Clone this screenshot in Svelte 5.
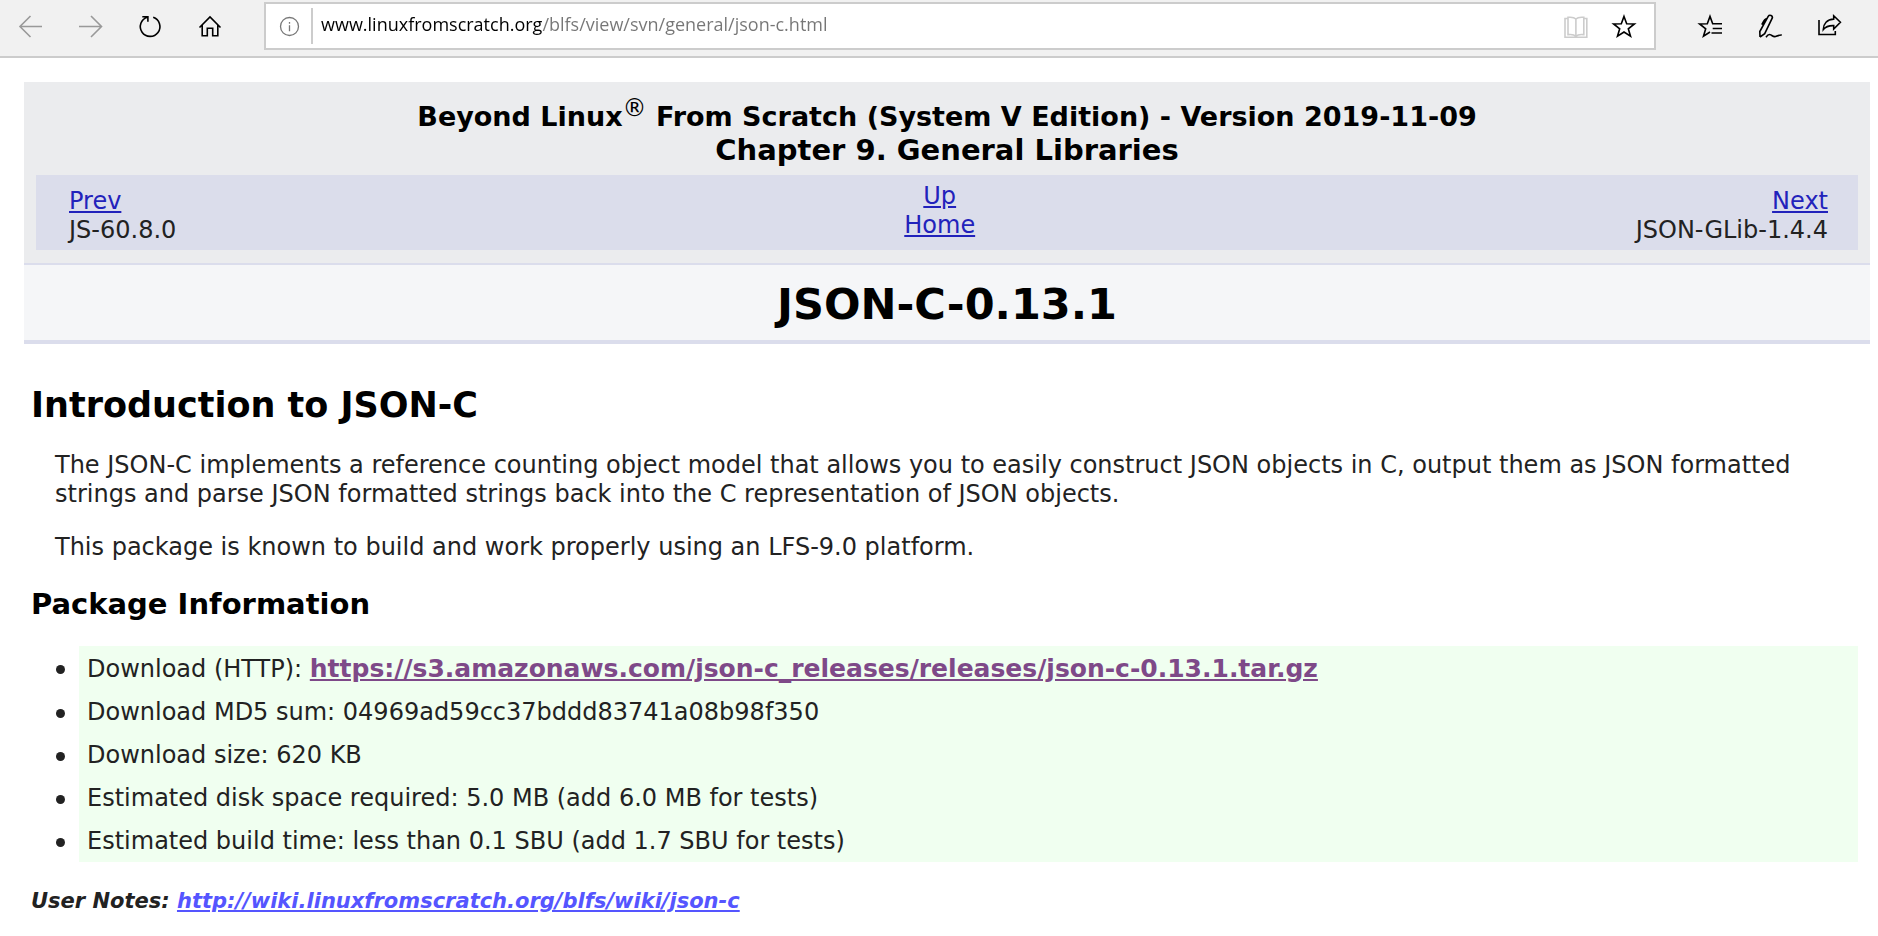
<script lang="ts">
  interface PackageItem {
    readonly label: string;
    readonly value: string;
    readonly href?: string;
  }

  let address = 'www.linuxfromscratch.org/blfs/view/svn/general/json-c.html';

  const packageItems: PackageItem[] = [
    {
      label: 'Download (HTTP):',
      value: 'https://s3.amazonaws.com/json-c_releases/releases/json-c-0.13.1.tar.gz',
      href: 'https://s3.amazonaws.com/json-c_releases/releases/json-c-0.13.1.tar.gz',
    },
    { label: 'Download MD5 sum:', value: '04969ad59cc37bddd83741a08b98f350' },
    { label: 'Download size:', value: '620 KB' },
    { label: 'Estimated disk space required:', value: '5.0 MB (add 6.0 MB for tests)' },
    { label: 'Estimated build time:', value: 'less than 0.1 SBU (add 1.7 SBU for tests)' },
  ];
</script>

<div class="toolbar">
  <button class="tool" aria-label="Back" disabled>
    <svg viewBox="0 0 24 24"><path d="M24 12.5H2M12.5 2L2 12.5 12.5 23" /></svg>
  </button>
  <button class="tool" aria-label="Forward" disabled>
    <svg viewBox="0 0 24 24"><path d="M1 12.5H23M13 2l10.5 10.5L13 23" /></svg>
  </button>
  <button class="tool" aria-label="Refresh">
    <svg viewBox="0 0 24 24">
      <path d="M15.2 3.3A9.8 9.8 0 1 1 9.4 3.2M4.3 2.7H9.9V7.8" />
    </svg>
  </button>
  <button class="tool" aria-label="Home">
    <svg viewBox="0 0 24 24">
      <path d="M1.5 13.5L12 3l10.5 10.5M4.2 11V21.8H9.3V14.3h5.4v7.5h5.1V11" />
    </svg>
  </button>

  <div class="address">
    <button class="info" aria-label="Site information">
      <svg viewBox="0 0 24 24">
        <circle cx="12.5" cy="12.5" r="9" />
        <path d="M12.5 8v1.8M12.5 11.2v6" />
      </svg>
    </button>
    <input class="url" type="text" aria-label="Address" spellcheck="false" bind:value={address} />
    <button class="reading" aria-label="Reading view" disabled>
      <svg viewBox="0 0 24 24">
        <path
          d="M4 4.5H1V23.3H22.8V4.5H19.8M11.9 5C10 3 7 3 4 3.3V20.6c3-.4 6-.3 7.9 1.7 1.9-2 4.9-2.1 7.9-1.7V3.3c-3-.3-6-.3-7.9 1.7V23"
        />
      </svg>
    </button>
    <button class="tool" aria-label="Add to favorites">
      <svg viewBox="0 0 24 24">
        <path
          d="M12 2.4L14.7 9.8 22.4 10 16.3 14.8 18.5 22.2 12 18 5.5 22.2 7.7 14.8 1.6 10 9.3 9.8Z"
        />
      </svg>
    </button>
  </div>

  <button class="tool" aria-label="Favorites">
    <svg viewBox="0 0 24 24">
      <path
        d="M24 9.8H14.7L12 2.4 9.3 9.8 1.6 10 7.7 14.8 5.5 22.2 12 18M14.7 14.5H24M13.5 19H24"
      />
    </svg>
  </button>
  <button class="tool" aria-label="Add notes">
    <svg viewBox="0 0 24 24">
      <path
        d="M2 23L1.8 17.5 10.2 2.3C11.5.2 15.2 1.6 14.2 4.2L6.7 19.6 2 23M8.8 4.6C6.8 4.6 5.6 7 3.8 10.6M8 23.2c1.5-2.2 3-3.4 4.8-2.3 2.2 1.3 3.2 2.4 5.4 1.4 1.7-.8 3.3-1.5 5.6-1.3"
      />
    </svg>
  </button>
  <button class="tool" aria-label="Share">
    <svg viewBox="0 0 24 24">
      <path
        d="M1 6V20.5H17.3V17M15.7 1.8L22.4 8.3 15.7 15V11.6C11 11.4 7.8 12.4 5.3 15.6 5.4 9.8 9 5.4 15.7 5.1Z"
      />
    </svg>
  </button>
</div>

<main class="page">
  <header class="navheader">
    <h4>Beyond Linux<sup>®</sup> From Scratch (System V Edition) - Version 2019-11-09</h4>
    <h3>Chapter 9. General Libraries</h3>
    <nav class="links">
      <div class="prev">
        <a href="#js60">Prev</a>
        <p>JS-60.8.0</p>
      </div>
      <div class="middle">
        <a href="#genlib">Up</a>
        <a href="#index">Home</a>
      </div>
      <div class="next">
        <a href="#json-glib">Next</a>
        <p>JSON-GLib-1.4.4</p>
      </div>
    </nav>
  </header>

  <h1>JSON-C-0.13.1</h1>

  <section class="package">
    <h2>Introduction to JSON-C</h2>
    <p>
      The JSON-C implements a reference counting object model that allows you to easily construct
      JSON objects in C, output them as JSON formatted strings and parse JSON formatted strings back
      into the C representation of JSON objects.
    </p>
    <p>This package is known to build and work properly using an LFS-9.0 platform.</p>

    <h3>Package Information</h3>
    <ul>
      {#each packageItems as item (item.label)}
        <li>
          {item.label}
          {#if item.href}
            <a href={item.href}>{item.value}</a>
          {:else}
            {item.value}
          {/if}
        </li>
      {/each}
    </ul>

    <div class="usernotes">
      User Notes:
      <a href="http://wiki.linuxfromscratch.org/blfs/wiki/json-c">http://wiki.linuxfromscratch.org/blfs/wiki/json-c</a>
    </div>
  </section>
</main>

<style>
  :global(body) {
    margin: 0;
    background: #fff;
  }

  .toolbar {
    display: flex;
    padding: 2px 18px 6px 0;
    background: #f1f1f1;
    border-bottom: 2px solid #ccc;
  }

  button {
    display: flex;
    align-items: center;
    justify-content: center;
    flex: none;
    padding: 0;
    border: 0;
    background: none;
    color: #000;
  }

  button:disabled {
    color: #999;
  }

  svg {
    width: 24px;
    height: 24px;
    fill: none;
    stroke: currentColor;
    stroke-width: 1.6;
    overflow: visible;
  }

  .tool {
    width: 60px;
  }

  .address {
    display: flex;
    flex: 1;
    box-sizing: border-box;
    height: 48px;
    margin: 0 24px;
    border: 2px solid #ccc;
    background: #fff;
  }

  .info {
    width: 45px;
    color: #777;
  }

  .info svg {
    stroke-width: 1.3;
  }

  .reading {
    width: 36px;
  }

  .reading:disabled {
    color: #ccc;
  }

  /* the host part of the address is darker than the path */
  .url {
    flex: 1;
    min-width: 0;
    margin: 4px 0;
    padding: 0 0 4px 8px;
    border: 0;
    border-left: 2px solid #ccc;
    outline: none;
    font: 18px 'Open Sans', 'Noto Sans', sans-serif;
    color: transparent;
    background: linear-gradient(to right, #000 229px, #767676 229px);
    background-clip: text;
    -webkit-background-clip: text;
    caret-color: #000;
  }

  .page {
    margin: 24px 8px 24px 24px;
    font: 24px/29px Verdana, 'DejaVu Sans', sans-serif;
    color: #222;
  }

  h1,
  h2,
  h3,
  h4 {
    margin: 0;
    color: #000;
  }

  p {
    margin: 0;
  }

  a {
    color: #22b;
  }

  .navheader {
    padding: 19px 12px 13px;
    background: #ebecee;
    border-bottom: 2px solid #dbddec;
    text-align: center;
  }

  .navheader h4 {
    font-size: 27px;
    line-height: 32px;
  }

  sup {
    font-size: 24px;
    font-weight: normal;
    line-height: 0;
  }

  h3 {
    font-size: 29px;
    line-height: 35px;
  }

  .links {
    display: grid;
    grid-template-columns: 46% 1fr 47%;
    margin-top: 7px;
    padding: 7px 30px 5px 33px;
    background: #dbddeb;
  }

  .prev,
  .next {
    padding-top: 5px;
  }

  .prev {
    text-align: left;
  }

  .next {
    text-align: right;
  }

  .middle {
    display: flex;
    flex-direction: column;
    align-items: center;
  }

  h1 {
    padding: 14px 0 11px;
    background: #f5f6f8;
    border-bottom: 4px solid #dbddec;
    font-size: 43px;
    line-height: 50px;
    text-align: center;
  }

  .package {
    padding: 40px 12px 0 7px;
  }

  h2 {
    margin-bottom: 25px;
    font-size: 35px;
    line-height: 42px;
  }

  .package p {
    margin: 24px;
  }

  .package h3 {
    margin-top: 25px;
  }

  ul {
    margin: 24px 0 27px;
    padding: 0 0 0 48px;
    list-style: none;
  }

  li {
    position: relative;
    padding: 8px 8px 6px;
    background: #f0fff0;
  }

  /* bullet in the margin, outside the tinted row */
  li::before {
    content: '';
    position: absolute;
    top: 19px;
    left: -23px;
    width: 9px;
    height: 9px;
    border-radius: 50%;
    background: #222;
  }

  li a {
    color: #7e4988;
    font-size: 25px;
    font-weight: bold;
  }

  .usernotes {
    font-size: 21px;
    line-height: 25px;
    font-weight: bold;
    font-style: italic;
  }

  .usernotes a {
    color: #55f;
  }
</style>
